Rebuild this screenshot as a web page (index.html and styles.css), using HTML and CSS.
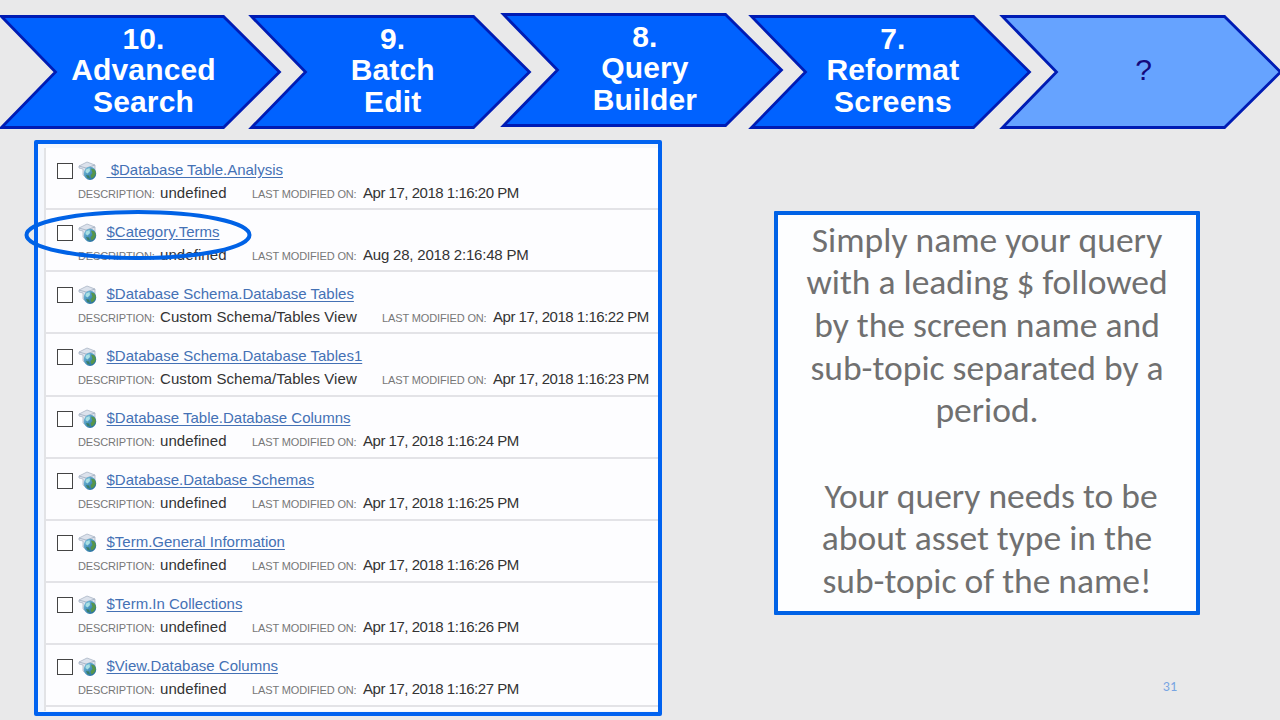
FILE: index.html
```html
<!DOCTYPE html>
<html lang="en">
<head>
  <meta charset="UTF-8" />
  <meta name="viewport" content="width=device-width, initial-scale=1.0"/>
  <title>Reformat Screens</title>
  <link rel="stylesheet" href="styles.css">
</head>
<body>
  <svg class="defs" width="0" height="0">
    <symbol id="chevron" viewBox="0 0 284 114">
      <path d="M3.5 1.5H225.5L281.5 57L225.5 112.5H3.5L57.5 57Z"/>
    </symbol>
    <linearGradient id="globe-fill" x1="0" y1="0" x2="1" y2="1">
      <stop offset="0" stop-color="#7cc4e0"/>
      <stop offset="1" stop-color="#155f96"/>
    </linearGradient>
    <symbol id="asset" viewBox="0 0 20 20">
      <path d="M1 5L9 1L17 4V12L8 16L5 14V8L1 7Z" fill="#dce2ec" stroke="#aab5c5" stroke-width=".8"/>
      <path d="M1 5L8 7L17 4M8 7V15" fill="none" stroke="#a5b2c4" stroke-width=".9"/>
      <ellipse cx="12" cy="12.4" rx="6.2" ry="6.6" fill="url(#globe-fill)"/>
      <path d="M13 7.5L16.5 8.5L18 12L16 16L13.5 17.5L12.5 14.5L14.5 12Z" fill="#57964a"/>
      <path d="M8 8.5L11.5 7L12 10L9.5 12.5L7.5 11Z" fill="#a9e0e4"/>
      <path d="M8 14L11 14.5L12 17.5L9.5 17Z" fill="#397f65"/>
    </symbol>
  </svg>

  <div class="steps">
    <div class="step first">
      <svg class="arrow"><use href="#chevron"/></svg>
      <span class="label">10.<br>Advanced<br>Search</span>
    </div>
    <div class="step">
      <svg class="arrow"><use href="#chevron"/></svg>
      <span class="label">9.<br>Batch<br>Edit</span>
    </div>
    <div class="step raised">
      <svg class="arrow"><use href="#chevron"/></svg>
      <span class="label">8.<br>Query<br>Builder</span>
    </div>
    <div class="step">
      <svg class="arrow"><use href="#chevron"/></svg>
      <span class="label">7.<br>Reformat<br>Screens</span>
    </div>
    <div class="step next">
      <svg class="arrow"><use href="#chevron"/></svg>
      <span class="label">?</span>
    </div>
  </div>

  <div class="content">
    <div class="panel">
      <div class="list">
        <div class="row">
          <span class="check"></span>
          <svg class="icon"><use href="#asset"/></svg>
          <a class="name">&nbsp;$Database Table.Analysis</a>
          <div class="meta"><span class="key desc">DESCRIPTION:</span><span class="value">undefined</span><span class="key mod">LAST MODIFIED ON:</span><span class="date">Apr 17, 2018 1:16:20 PM</span></div>
        </div>
        <div class="row">
          <span class="check"></span>
          <svg class="icon"><use href="#asset"/></svg>
          <a class="name">$Category.Terms</a>
          <div class="meta"><span class="key desc">DESCRIPTION:</span><span class="value">undefined</span><span class="key mod">LAST MODIFIED ON:</span><span class="date aug">Aug 28, 2018 2:16:48 PM</span></div>
          <svg class="ring" viewBox="0 0 228 52"><ellipse cx="114" cy="26" rx="111.5" ry="23"/></svg>
        </div>
        <div class="row">
          <span class="check"></span>
          <svg class="icon"><use href="#asset"/></svg>
          <a class="name">$Database Schema.Database Tables</a>
          <div class="meta"><span class="key desc">DESCRIPTION:</span><span class="value long">Custom Schema/Tables View</span><span class="key mod">LAST MODIFIED ON:</span><span class="date">Apr 17, 2018 1:16:22 PM</span></div>
        </div>
        <div class="row">
          <span class="check"></span>
          <svg class="icon"><use href="#asset"/></svg>
          <a class="name">$Database Schema.Database Tables1</a>
          <div class="meta"><span class="key desc">DESCRIPTION:</span><span class="value long">Custom Schema/Tables View</span><span class="key mod">LAST MODIFIED ON:</span><span class="date">Apr 17, 2018 1:16:23 PM</span></div>
        </div>
        <div class="row">
          <span class="check"></span>
          <svg class="icon"><use href="#asset"/></svg>
          <a class="name">$Database Table.Database Columns</a>
          <div class="meta"><span class="key desc">DESCRIPTION:</span><span class="value">undefined</span><span class="key mod">LAST MODIFIED ON:</span><span class="date">Apr 17, 2018 1:16:24 PM</span></div>
        </div>
        <div class="row">
          <span class="check"></span>
          <svg class="icon"><use href="#asset"/></svg>
          <a class="name">$Database.Database Schemas</a>
          <div class="meta"><span class="key desc">DESCRIPTION:</span><span class="value">undefined</span><span class="key mod">LAST MODIFIED ON:</span><span class="date">Apr 17, 2018 1:16:25 PM</span></div>
        </div>
        <div class="row">
          <span class="check"></span>
          <svg class="icon"><use href="#asset"/></svg>
          <a class="name">$Term.General Information</a>
          <div class="meta"><span class="key desc">DESCRIPTION:</span><span class="value">undefined</span><span class="key mod">LAST MODIFIED ON:</span><span class="date">Apr 17, 2018 1:16:26 PM</span></div>
        </div>
        <div class="row">
          <span class="check"></span>
          <svg class="icon"><use href="#asset"/></svg>
          <a class="name">$Term.In Collections</a>
          <div class="meta"><span class="key desc">DESCRIPTION:</span><span class="value">undefined</span><span class="key mod">LAST MODIFIED ON:</span><span class="date">Apr 17, 2018 1:16:26 PM</span></div>
        </div>
        <div class="row">
          <span class="check"></span>
          <svg class="icon"><use href="#asset"/></svg>
          <a class="name">$View.Database Columns</a>
          <div class="meta"><span class="key desc">DESCRIPTION:</span><span class="value">undefined</span><span class="key mod">LAST MODIFIED ON:</span><span class="date">Apr 17, 2018 1:16:27 PM</span></div>
        </div>
      </div>
    </div>

    <div class="side">
      <div class="note">
        <p>Simply name your query<br>with a leading $ followed<br>by the screen name and<br>sub-topic separated by a<br>period.</p>
        <p><span class="shift">Your query needs to be</span><br>about asset type in the<br>sub-topic of the name!</p>
      </div>
      <div class="page">31</div>
    </div>
  </div>
</body>
</html>
```

FILE: styles.css
```css
body {
  margin: 0;
  width: 1280px;
  height: 720px;
  overflow: hidden;
  background: #e9e9ea;
  font-family: "Liberation Sans", Arial, sans-serif;
}
.defs {
  display: block;
}
.steps {
  display: flex;
  height: 126px;
  padding-top: 14.5px;
  margin-left: -2px;
}
.step {
  display: grid;
  flex: none;
  width: 284px;
  height: 114px;
  margin-right: -33.8px;
}
.step.raised {
  margin-top: -2px;
  margin-left: 2px;
  margin-right: -36px;
}
.arrow, .label {
  grid-area: 1 / 1;
}
.arrow {
  width: 284px;
  height: 114px;
  fill: #0062ff;
  stroke: #001cb4;
  stroke-width: 2.8;
}
.label {
  align-self: center;
  text-align: center;
  color: white;
  font-size: 30px;
  font-weight: bold;
  font-kerning: none;
  letter-spacing: 0.15px;
  line-height: 31.3px;
  padding-left: 5px;
  padding-bottom: 3px;
}
.first .label {
  padding-left: 7px;
}
.next .arrow {
  fill: #66a3ff;
}
.next .label {
  color: #14087c;
  font-weight: normal;
  padding-left: 6px;
}
.content {
  display: flex;
  align-items: flex-start;
}
.panel {
  box-sizing: border-box;
  flex: none;
  width: 628px;
  height: 576px;
  margin-left: 34px;
  margin-top: -1px;
  padding: 4.7px 0 0 6px;
  border: 4px solid #0062f0;
  border-radius: 2px;
  background: #f4f7fc;
}
.list {
  height: 563.3px;
  border-left: 2px solid #e2e3e6;
  background: #fdfdff;
}
.row {
  position: relative;
  box-sizing: border-box;
  display: grid;
  grid-template-columns: 21px 28.5px 1fr;
  grid-template-rows: 28px 22px;
  height: 62.1px;
  padding: 6.5px 0 0 11px;
  border-bottom: 2px solid #e3e3e7;
}
.check {
  box-sizing: border-box;
  width: 16px;
  height: 16px;
  margin-top: 8px;
  border: 1.5px solid #444;
  background: white;
}
.icon {
  width: 20px;
  height: 20px;
  margin-top: 6px;
}
.name {
  justify-self: start;
  margin-top: 6px;
  color: #4471b5;
  font-size: 15px;
  line-height: 18px;
  text-decoration: underline;
  text-underline-offset: 2px;
  white-space: nowrap;
}
.meta {
  grid-column: 2 / 4;
  display: flex;
  align-items: baseline;
  line-height: 20px;
  white-space: nowrap;
  color: #333;
  font-size: 15px;
}
.key {
  color: #777;
  font-size: 11px;
  letter-spacing: -0.13px;
}
.desc {
  width: 82px;
}
.value {
  width: 92px;
  letter-spacing: 0.08px;
}
.value.long {
  width: 222px;
}
.mod {
  width: 111px;
}
.date {
  letter-spacing: -0.48px;
}
.date.aug {
  letter-spacing: -0.2px;
}
.ring {
  position: absolute;
  left: -22px;
  top: -1px;
  width: 228px;
  height: 52px;
  fill: none;
  stroke: #0062e6;
  stroke-width: 4;
}
.side {
  flex: none;
  margin-left: 112px;
  padding-top: 70px;
}
.note {
  box-sizing: border-box;
  width: 426px;
  height: 404px;
  padding: 4px 0 0;
  border: 4px solid #0062e6;
  border-radius: 1px;
  background: #fdfeff;
  color: #707070;
  font-family: Carlito, Lato, sans-serif;
  font-size: 35.5px;
  line-height: 42.7px;
  text-align: center;
  white-space: nowrap;
}
.note p {
  margin: 0 0 42.7px;
}
.shift {
  padding-left: 8px;
}
.page {
  margin-top: 63px;
  padding-right: 23px;
  color: #78a5e2;
  font-family: Carlito, Lato, sans-serif;
  font-size: 14px;
  line-height: 18px;
  text-align: right;
}
```
